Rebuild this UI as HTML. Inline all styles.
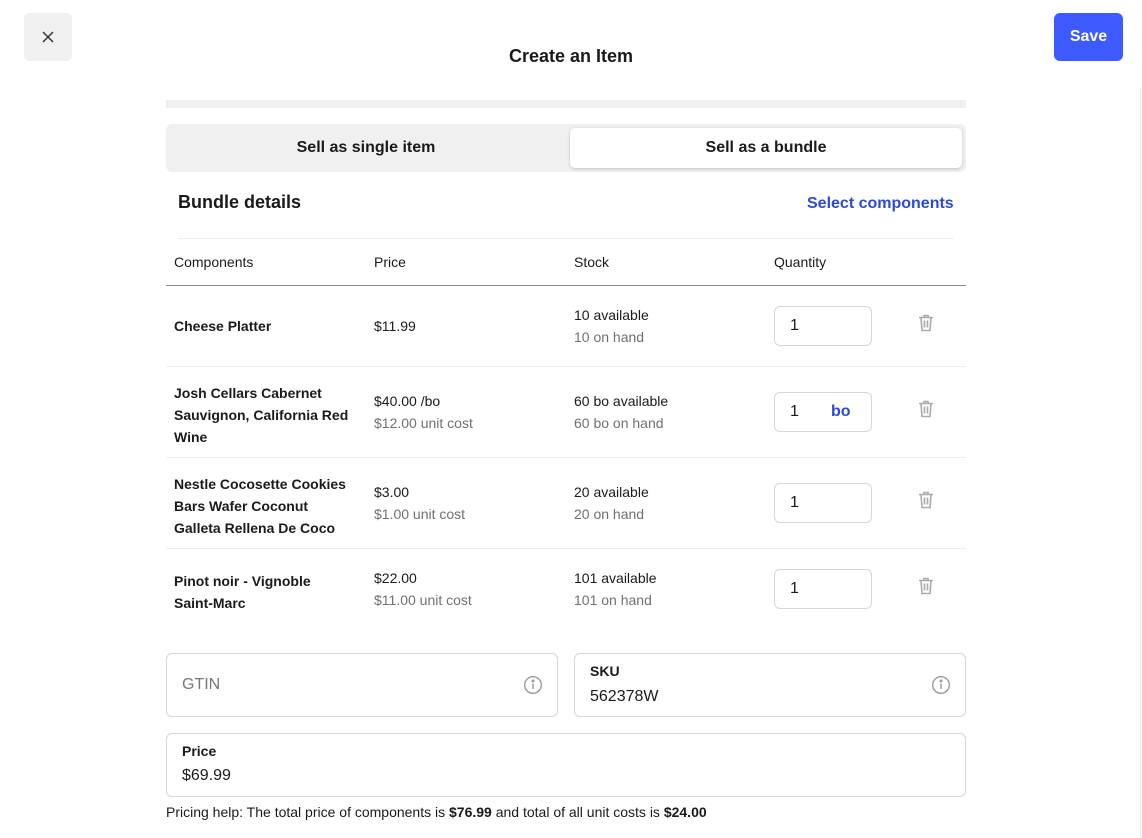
<!DOCTYPE html>
<html><head><style>
*{box-sizing:border-box;margin:0;padding:0}
body{width:1142px;height:835px;background:#fff;font-family:"Liberation Sans",sans-serif;color:#1a1a1a;position:relative;overflow:hidden;font-size:14px}
.a{position:absolute;white-space:nowrap}
.b{font-weight:bold}
.g{color:#707070}
.qty{position:absolute;left:774px;width:98px;height:40px;border:1px solid #d6d6d6;border-radius:6px;font-size:16px;padding:10px 0 0 15px}
.tr{position:absolute;left:918px}
.sep{position:absolute;left:166px;width:800px;height:1px;background:#ececec}
.fld{position:absolute;border:1px solid #d6d6d6;border-radius:6px}
</style></head><body>
<div class="a" style="left:24px;top:13px;width:48px;height:48px;background:#f0f0f0;border-radius:6px"></div>
<svg class="a" style="left:42px;top:31px" width="12" height="12" viewBox="0 0 12 12" stroke="#333" stroke-width="1.5"><path d="M1 1l10 10M11 1L1 11"/></svg>
<div class="a b" style="left:0;width:1142px;text-align:center;top:46px;font-size:18px">Create an Item</div>
<div class="a b" style="left:1054px;top:13px;width:69px;height:48px;background:#3d5afe;border-radius:6px;color:#fff;text-align:center;line-height:48px;font-size:16px">Save</div>
<div class="a" style="left:1140px;top:88px;width:1px;height:750px;background:#e4e4e4"></div>
<div class="a" style="left:166px;top:100px;width:800px;height:8px;background:#f0f0f0"></div>
<div class="a" style="left:166px;top:124px;width:800px;height:48px;background:#f0f0f0;border-radius:6px"></div>
<div class="a b" style="left:166px;width:400px;text-align:center;top:139px;font-size:16px">Sell as single item</div>
<div class="a b" style="left:570px;top:128px;width:392px;height:40px;background:#fff;border-radius:5px;box-shadow:0 1px 3px rgba(0,0,0,.2);text-align:center;line-height:40px;font-size:16px">Sell as a bundle</div>
<div class="a b" style="left:178px;top:192px;font-size:18px">Bundle details</div>
<div class="a b" style="left:807px;top:195px;font-size:16px;color:#2b49d8">Select components</div>
<div class="a" style="left:178px;top:238px;width:776px;height:1px;background:#ececec"></div>
<div class="a" style="left:174px;top:254px">Components</div>
<div class="a" style="left:374px;top:254px">Price</div>
<div class="a" style="left:574px;top:254px">Stock</div>
<div class="a" style="left:774px;top:254px">Quantity</div>
<div class="a" style="left:166px;top:285px;width:800px;height:1px;background:#8a8a8a"></div>

<div class="a b" style="left:174px;top:318px">Cheese Platter</div>
<div class="a" style="left:374px;top:318px">$11.99</div>
<div class="a" style="left:574px;top:307px">10 available</div>
<div class="a g" style="left:574px;top:329px">10 on hand</div>
<div class="qty" style="top:306px">1</div>
<svg class="tr" style="top:314px" width="16" height="18" viewBox="0 0 16 18" fill="none" stroke="#aaa" stroke-width="1.6"><path d="M1 3.5h14M6 3.5V1.5h4v2M3 3.5l1 13h8l1-13M6.5 6.5v7M9.5 6.5v7"/></svg>
<div class="sep" style="top:366px"></div>

<div class="a b" style="left:174px;top:382px;line-height:22px">Josh Cellars Cabernet<br>Sauvignon, California Red<br>Wine</div>
<div class="a" style="left:374px;top:393px">$40.00 /bo</div>
<div class="a g" style="left:374px;top:415px">$12.00 unit cost</div>
<div class="a" style="left:574px;top:393px">60 bo available</div>
<div class="a g" style="left:574px;top:415px">60 bo on hand</div>
<div class="qty" style="top:392px">1<span class="b" style="position:absolute;left:56px;color:#2b49d8">bo</span></div>
<svg class="tr" style="top:400px" width="16" height="18" viewBox="0 0 16 18" fill="none" stroke="#aaa" stroke-width="1.6"><path d="M1 3.5h14M6 3.5V1.5h4v2M3 3.5l1 13h8l1-13M6.5 6.5v7M9.5 6.5v7"/></svg>
<div class="sep" style="top:457px"></div>

<div class="a b" style="left:174px;top:473px;line-height:22px">Nestle Cocosette Cookies<br>Bars Wafer Coconut<br>Galleta Rellena De Coco</div>
<div class="a" style="left:374px;top:484px">$3.00</div>
<div class="a g" style="left:374px;top:506px">$1.00 unit cost</div>
<div class="a" style="left:574px;top:484px">20 available</div>
<div class="a g" style="left:574px;top:506px">20 on hand</div>
<div class="qty" style="top:483px">1</div>
<svg class="tr" style="top:491px" width="16" height="18" viewBox="0 0 16 18" fill="none" stroke="#aaa" stroke-width="1.6"><path d="M1 3.5h14M6 3.5V1.5h4v2M3 3.5l1 13h8l1-13M6.5 6.5v7M9.5 6.5v7"/></svg>
<div class="sep" style="top:548px"></div>

<div class="a b" style="left:174px;top:570px;line-height:22px">Pinot noir - Vignoble<br>Saint-Marc</div>
<div class="a" style="left:374px;top:570px">$22.00</div>
<div class="a g" style="left:374px;top:592px">$11.00 unit cost</div>
<div class="a" style="left:574px;top:570px">101 available</div>
<div class="a g" style="left:574px;top:592px">101 on hand</div>
<div class="qty" style="top:569px">1</div>
<svg class="tr" style="top:577px" width="16" height="18" viewBox="0 0 16 18" fill="none" stroke="#aaa" stroke-width="1.6"><path d="M1 3.5h14M6 3.5V1.5h4v2M3 3.5l1 13h8l1-13M6.5 6.5v7M9.5 6.5v7"/></svg>

<div class="fld" style="left:166px;top:653px;width:392px;height:64px"></div>
<div class="a" style="left:182px;top:676px;font-size:16px;color:#777">GTIN</div>
<svg class="a" style="left:523px;top:675px" width="20" height="20" viewBox="0 0 20 20" fill="none" stroke="#999" stroke-width="1.4"><circle cx="10" cy="10" r="8.3"/><path d="M10 8.5v5.5"/><circle cx="10" cy="6" r=".8" fill="#999"/></svg>
<div class="fld" style="left:574px;top:653px;width:392px;height:64px"></div>
<div class="a b" style="left:590px;top:663px">SKU</div>
<div class="a" style="left:590px;top:688px;font-size:16px">562378W</div>
<svg class="a" style="left:931px;top:675px" width="20" height="20" viewBox="0 0 20 20" fill="none" stroke="#999" stroke-width="1.4"><circle cx="10" cy="10" r="8.3"/><path d="M10 8.5v5.5"/><circle cx="10" cy="6" r=".8" fill="#999"/></svg>
<div class="fld" style="left:166px;top:733px;width:800px;height:64px"></div>
<div class="a b" style="left:182px;top:743px">Price</div>
<div class="a" style="left:182px;top:767px;font-size:16px">$69.99</div>
<div class="a" style="left:166px;top:804px">Pricing help: The total price of components is <b>$76.99</b> and total of all unit costs is <b>$24.00</b></div>
</body></html>
